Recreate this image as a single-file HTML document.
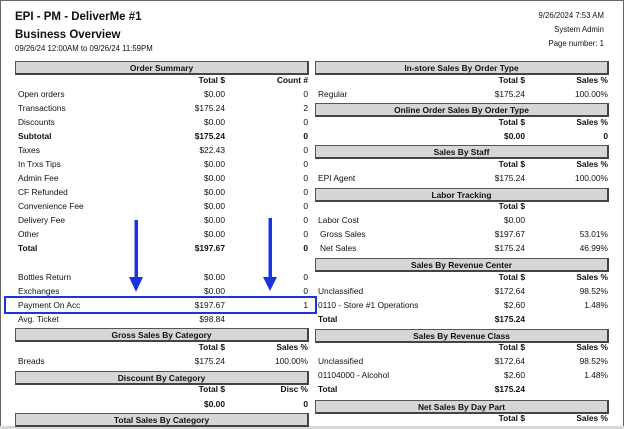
<!DOCTYPE html>
<html><head><meta charset="utf-8"><style>
*{margin:0;padding:0;box-sizing:border-box}
body{width:624px;height:429px;overflow:hidden;background:#fff;font-family:"Liberation Sans",Arial,sans-serif;color:#111;position:relative}
#frame{position:absolute;left:0;top:0;width:624px;height:427px;border:1px solid #666;border-bottom:none}
#bot{position:absolute;left:0;top:426px;width:624px;height:3px;background:#d8d8d8}
.t{position:absolute;font-size:8.4px;line-height:12px;height:12px;white-space:nowrap}
.b{font-weight:bold}
.bar{position:absolute;height:14px;background:#d6d6d6;border:1px solid #555;border-right:2px solid #444;border-bottom:2px solid #444;font-size:8.4px;font-weight:bold;text-align:center;line-height:12px}
.rt{text-align:right}
</style></head><body>
<div id="frame"></div><div id="bot"></div>
<div class="t b" style="left:15px;top:10px;font-size:11.5px;line-height:14px;height:14px">EPI - PM - DeliverMe #1</div>
<div class="t b" style="left:15px;top:28px;font-size:11.5px;line-height:14px;height:14px">Business Overview</div>
<div class="t" style="left:15px;top:43px;font-size:7.8px">09/26/24 12:00AM to 09/26/24 11:59PM</div>
<div class="t rt" style="left:450px;width:154px;top:10px;font-size:7.8px">9/26/2024 7:53 AM</div>
<div class="t rt" style="left:450px;width:154px;top:24px;font-size:7.8px">System Admin</div>
<div class="t rt" style="left:450px;width:154px;top:38px;font-size:7.8px">Page number: 1</div>

<div class="bar" style="left:15px;top:61px;width:294px">Order Summary</div>
<div class="bar" style="left:15px;top:328px;width:294px">Gross Sales By Category</div>
<div class="bar" style="left:15px;top:371px;width:294px">Discount By Category</div>
<div class="bar" style="left:15px;top:413px;width:294px">Total Sales By Category</div>
<div class="bar" style="left:315px;top:61px;width:294px">In-store Sales By Order Type</div>
<div class="bar" style="left:315px;top:103px;width:294px">Online Order Sales By Order Type</div>
<div class="bar" style="left:315px;top:145px;width:294px">Sales By Staff</div>
<div class="bar" style="left:315px;top:188px;width:294px">Labor Tracking</div>
<div class="bar" style="left:315px;top:258px;width:294px">Sales By Revenue Center</div>
<div class="bar" style="left:315px;top:329px;width:294px">Sales By Revenue Class</div>
<div class="bar" style="left:315px;top:400px;width:294px">Net Sales By Day Part</div>

<div style="position:absolute;left:0;top:0">
<div class="t b rt" style="left:125px;width:100px;top:74px">Total $</div><div class="t b rt" style="left:230px;width:78px;top:74px">Count #</div>
<div class="t" style="left:18px;top:88px">Open orders</div><div class="t rt" style="left:125px;width:100px;top:88px">$0.00</div><div class="t rt" style="left:230px;width:78px;top:88px">0</div>
<div class="t" style="left:18px;top:102px">Transactions</div><div class="t rt" style="left:125px;width:100px;top:102px">$175.24</div><div class="t rt" style="left:230px;width:78px;top:102px">2</div>
<div class="t" style="left:18px;top:116px">Discounts</div><div class="t rt" style="left:125px;width:100px;top:116px">$0.00</div><div class="t rt" style="left:230px;width:78px;top:116px">0</div>
<div class="t b" style="left:18px;top:130px">Subtotal</div><div class="t b rt" style="left:125px;width:100px;top:130px">$175.24</div><div class="t b rt" style="left:230px;width:78px;top:130px">0</div>
<div class="t" style="left:18px;top:144px">Taxes</div><div class="t rt" style="left:125px;width:100px;top:144px">$22.43</div><div class="t rt" style="left:230px;width:78px;top:144px">0</div>
<div class="t" style="left:18px;top:158px">In Trxs Tips</div><div class="t rt" style="left:125px;width:100px;top:158px">$0.00</div><div class="t rt" style="left:230px;width:78px;top:158px">0</div>
<div class="t" style="left:18px;top:172px">Admin Fee</div><div class="t rt" style="left:125px;width:100px;top:172px">$0.00</div><div class="t rt" style="left:230px;width:78px;top:172px">0</div>
<div class="t" style="left:18px;top:186px">CF Refunded</div><div class="t rt" style="left:125px;width:100px;top:186px">$0.00</div><div class="t rt" style="left:230px;width:78px;top:186px">0</div>
<div class="t" style="left:18px;top:200px">Convenience Fee</div><div class="t rt" style="left:125px;width:100px;top:200px">$0.00</div><div class="t rt" style="left:230px;width:78px;top:200px">0</div>
<div class="t" style="left:18px;top:214px">Delivery Fee</div><div class="t rt" style="left:125px;width:100px;top:214px">$0.00</div><div class="t rt" style="left:230px;width:78px;top:214px">0</div>
<div class="t" style="left:18px;top:228px">Other</div><div class="t rt" style="left:125px;width:100px;top:228px">$0.00</div><div class="t rt" style="left:230px;width:78px;top:228px">0</div>
<div class="t b" style="left:18px;top:242px">Total</div><div class="t b rt" style="left:125px;width:100px;top:242px">$197.67</div><div class="t b rt" style="left:230px;width:78px;top:242px">0</div>
<div class="t" style="left:18px;top:271px">Bottles Return</div><div class="t rt" style="left:125px;width:100px;top:271px">$0.00</div><div class="t rt" style="left:230px;width:78px;top:271px">0</div>
<div class="t" style="left:18px;top:285px">Exchanges</div><div class="t rt" style="left:125px;width:100px;top:285px">$0.00</div><div class="t rt" style="left:230px;width:78px;top:285px">0</div>
<div class="t" style="left:18px;top:299px">Payment On Acc</div><div class="t rt" style="left:125px;width:100px;top:299px">$197.67</div><div class="t rt" style="left:230px;width:78px;top:299px">1</div>
<div class="t" style="left:18px;top:313px">Avg. Ticket</div><div class="t rt" style="left:125px;width:100px;top:313px">$98.84</div>
<div class="t b rt" style="left:125px;width:100px;top:341px">Total $</div><div class="t b rt" style="left:230px;width:78px;top:341px">Sales %</div>
<div class="t" style="left:18px;top:355px">Breads</div><div class="t rt" style="left:125px;width:100px;top:355px">$175.24</div><div class="t rt" style="left:230px;width:78px;top:355px">100.00%</div>
<div class="t b rt" style="left:125px;width:100px;top:383px">Total $</div><div class="t b rt" style="left:230px;width:78px;top:383px">Disc %</div>
<div class="t b rt" style="left:125px;width:100px;top:398px">$0.00</div><div class="t b rt" style="left:230px;width:78px;top:398px">0</div>
</div>

<div style="position:absolute;left:300px;top:0">
<div class="t b rt" style="left:125px;width:100px;top:74px">Total $</div><div class="t b rt" style="left:230px;width:78px;top:74px">Sales %</div>
<div class="t" style="left:18px;top:88px">Regular</div><div class="t rt" style="left:125px;width:100px;top:88px">$175.24</div><div class="t rt" style="left:230px;width:78px;top:88px">100.00%</div>
<div class="t b rt" style="left:125px;width:100px;top:116px">Total $</div><div class="t b rt" style="left:230px;width:78px;top:116px">Sales %</div>
<div class="t b rt" style="left:125px;width:100px;top:130px">$0.00</div><div class="t b rt" style="left:230px;width:78px;top:130px">0</div>
<div class="t b rt" style="left:125px;width:100px;top:158px">Total $</div><div class="t b rt" style="left:230px;width:78px;top:158px">Sales %</div>
<div class="t" style="left:18px;top:172px">EPI Agent</div><div class="t rt" style="left:125px;width:100px;top:172px">$175.24</div><div class="t rt" style="left:230px;width:78px;top:172px">100.00%</div>
<div class="t b rt" style="left:125px;width:100px;top:200px">Total $</div>
<div class="t" style="left:18px;top:214px">Labor Cost</div><div class="t rt" style="left:125px;width:100px;top:214px">$0.00</div>
<div class="t" style="left:20px;top:228px">Gross Sales</div><div class="t rt" style="left:125px;width:100px;top:228px">$197.67</div><div class="t rt" style="left:230px;width:78px;top:228px">53.01%</div>
<div class="t" style="left:20px;top:242px">Net Sales</div><div class="t rt" style="left:125px;width:100px;top:242px">$175.24</div><div class="t rt" style="left:230px;width:78px;top:242px">46.99%</div>
<div class="t b rt" style="left:125px;width:100px;top:271px">Total $</div><div class="t b rt" style="left:230px;width:78px;top:271px">Sales %</div>
<div class="t" style="left:18px;top:285px">Unclassified</div><div class="t rt" style="left:125px;width:100px;top:285px">$172.64</div><div class="t rt" style="left:230px;width:78px;top:285px">98.52%</div>
<div class="t" style="left:18px;top:299px">0110 - Store #1 Operations</div><div class="t rt" style="left:125px;width:100px;top:299px">$2.60</div><div class="t rt" style="left:230px;width:78px;top:299px">1.48%</div>
<div class="t b" style="left:18px;top:313px">Total</div><div class="t b rt" style="left:125px;width:100px;top:313px">$175.24</div>
<div class="t b rt" style="left:125px;width:100px;top:341px">Total $</div><div class="t b rt" style="left:230px;width:78px;top:341px">Sales %</div>
<div class="t" style="left:18px;top:355px">Unclassified</div><div class="t rt" style="left:125px;width:100px;top:355px">$172.64</div><div class="t rt" style="left:230px;width:78px;top:355px">98.52%</div>
<div class="t" style="left:18px;top:369px">01104000 - Alcohol</div><div class="t rt" style="left:125px;width:100px;top:369px">$2.60</div><div class="t rt" style="left:230px;width:78px;top:369px">1.48%</div>
<div class="t b" style="left:18px;top:383px">Total</div><div class="t b rt" style="left:125px;width:100px;top:383px">$175.24</div>
<div class="t b rt" style="left:125px;width:100px;top:412px">Total $</div><div class="t b rt" style="left:230px;width:78px;top:412px">Sales %</div>
</div>

<div style="position:absolute;left:4px;top:296px;width:313px;height:18px;border:2px solid #1a35e0"></div>
<svg style="position:absolute;left:0;top:0" width="624" height="429">
<g fill="#1a35e0">
<rect x="134.5" y="220" width="3.5" height="58"/><polygon points="129,277 143,277 136,292"/>
<rect x="268.5" y="218" width="3.5" height="60"/><polygon points="263,277 277,277 270,291"/>
</g>
</svg>
</body></html>
